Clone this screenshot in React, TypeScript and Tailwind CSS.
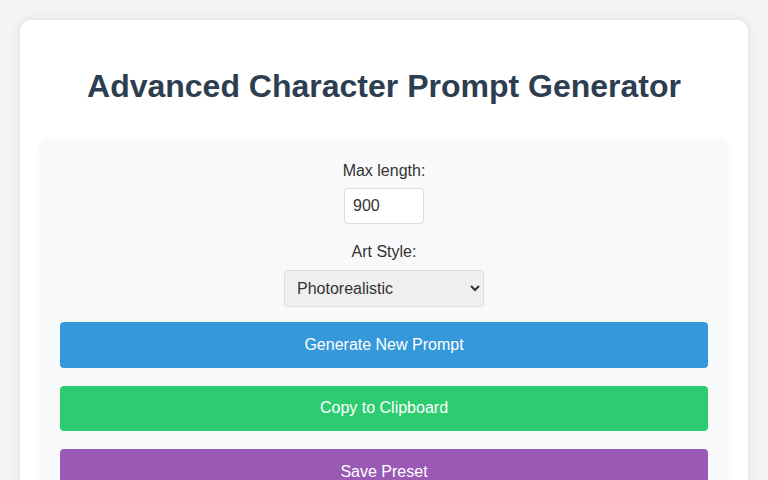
import { useState } from 'react';

const STYLES = ['Photorealistic', 'Anime', 'Oil Painting', 'Watercolor', 'Digital Art', 'Fantasy'];

export default function App() {
  const [maxLength, setMaxLength] = useState('900');
  const [artStyle, setArtStyle] = useState('Photorealistic');

  return (
    <div className="min-h-screen bg-[#f4f4f4] p-5 font-['Liberation_Sans',Arial,sans-serif] text-[#333]">
      <div className="rounded-[10px] bg-white px-5 pb-5 pt-[48px] shadow-[0_0_10px_rgba(0,0,0,0.1)]">
        <h1 className="text-center text-[32px] font-bold leading-[37px] text-[#2c3e50]">
          Advanced Character Prompt Generator
        </h1>

        <div className="mt-[35px] rounded-lg bg-[#f8f9fa] px-5 pb-5 pt-[22px] shadow-[0_0_5px_rgba(0,0,0,0.05)]">
          <div className="flex flex-col items-center">
            <label className="text-base leading-[18px]">Max length:</label>
            <input
              type="number"
              value={maxLength}
              onChange={(e) => setMaxLength(e.target.value)}
              className="mt-2 h-9 w-20 rounded border border-[#ddd] bg-white px-2 text-base text-[#333] outline-none"
            />
            <label className="mt-[19px] text-base leading-[18px]">Art Style:</label>
            <select
              value={artStyle}
              onChange={(e) => setArtStyle(e.target.value)}
              className="mt-[9px] h-[37px] w-[200px] rounded border border-[#ddd] bg-[#efefef] px-2 text-base text-[#333]"
            >
              {STYLES.map((s) => (
                <option key={s}>{s}</option>
              ))}
            </select>
          </div>

          <div className="mt-[15px] flex flex-col gap-[18px]">
            <button className="h-[45.6px] w-full rounded bg-[#3498db] text-base text-white">
              Generate New Prompt
            </button>
            <button className="h-[45.6px] w-full rounded bg-[#2ecc71] text-base text-white">
              Copy to Clipboard
            </button>
            <button className="h-[45.6px] w-full rounded bg-[#9b59b6] text-base text-white">
              Save Preset
            </button>
          </div>
        </div>
      </div>
    </div>
  );
}
